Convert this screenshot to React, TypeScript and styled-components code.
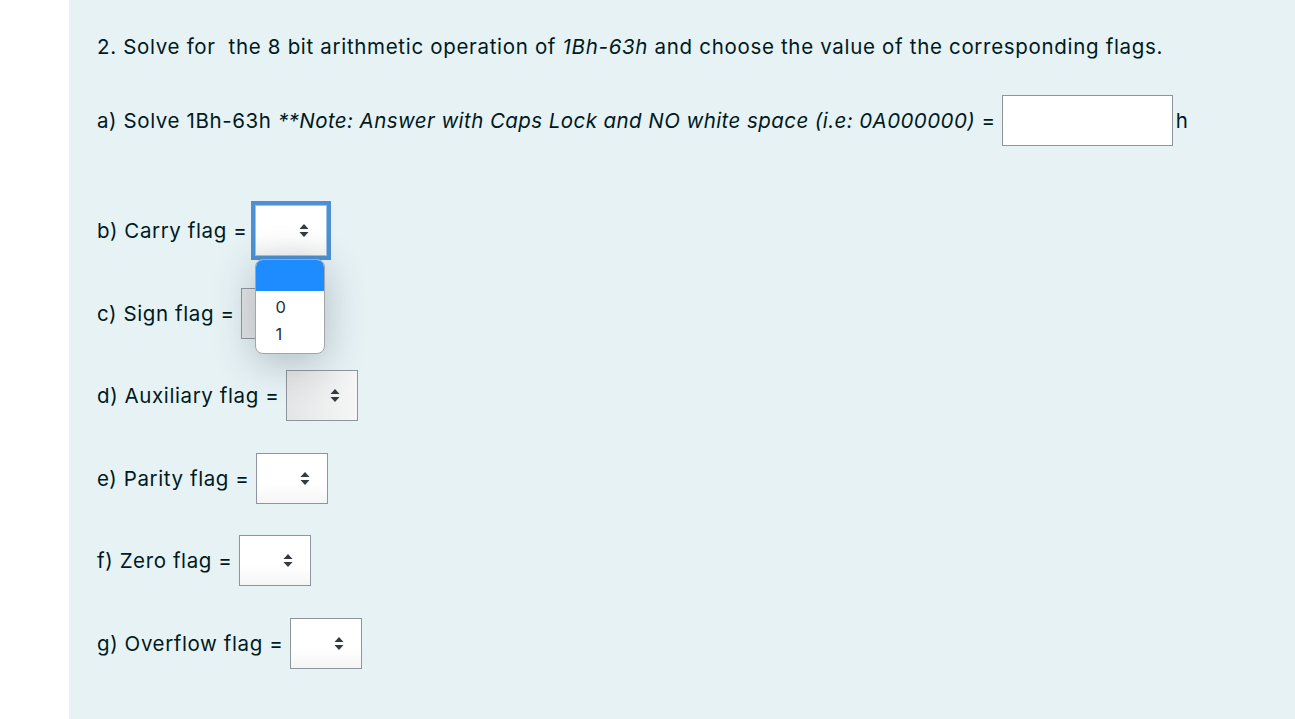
import React from "react";
import styled, { createGlobalStyle } from "styled-components";

const Global = createGlobalStyle`
  html, body { margin: 0; padding: 0; background: #ffffff; }
  body { font-family: "Inter", "Open Sans", sans-serif; color: #001a1e; }
`;

const Page = styled.div`
  display: flex;
  width: 1295px;
  height: 719px;
  overflow: hidden;
`;

const Gutter = styled.div`
  width: 69px;
  flex: none;
  background: #ffffff;
`;

const Panel = styled.div`
  flex: 1;
  background: #e7f2f5;
  padding: 33px 0 0 28px;
  display: flex;
  flex-direction: column;
  font-size: 20.5px;
  letter-spacing: 0.6px;
`;

const Question = styled.div`
  height: 28px;
  line-height: 28px;
  white-space: pre;
  letter-spacing: 0.68px;
`;

const Row = styled.div<{ $top: number }>`
  display: flex;
  align-items: center;
  height: 51px;
  margin-top: ${(p) => p.$top}px;
  white-space: pre;
  position: relative;
`;

const Em = styled.em<{ $tight?: boolean }>`
  font-style: italic;
  letter-spacing: ${(p) => (p.$tight ? "0.43px" : "inherit")};
`;

const TextInput = styled.div`
  width: 169px;
  height: 49px;
  border: 1px solid #8f959e;
  background: #ffffff;
  margin-left: 6px;
`;

const Suffix = styled.span`
  margin-left: 3px;
`;

const SelectWrap = styled.div<{ $gap: number }>`
  position: relative;
  margin-left: ${(p) => p.$gap}px;
`;

const SelectBox = styled.div<{ $shaded?: boolean; $focus?: boolean }>`
  height: 49px;
  border: 1px solid ${(p) => (p.$focus ? "#9ec3ea" : "#8f959e")};
  background: ${(p) =>
    p.$shaded
      ? "linear-gradient(90deg, #e4e5e6 0%, #f6f6f6 100%)"
      : "linear-gradient(180deg, #ffffff 60%, #f5f5f5 100%)"};
  box-shadow: ${(p) => (p.$focus ? "0 0 0 4px #4d90d4" : "none")};
  display: flex;
  align-items: center;
  justify-content: flex-end;
  padding-right: 17px;
  box-sizing: content-box;
  width: 53px;
`;

const Dropdown = styled.div`
  position: absolute;
  left: 0;
  top: 54px;
  width: 68px;
  height: 93px;
  background: #ffffff;
  border: 1px solid #a3a6a8;
  border-radius: 8px;
  overflow: hidden;
  box-shadow: 0 8px 40px rgba(40, 60, 70, 0.3);
  z-index: 5;
  display: flex;
  flex-direction: column;
  font-size: 16.5px;
  letter-spacing: 0;
`;

const Option = styled.div<{ $selected?: boolean }>`
  height: ${(p) => (p.$selected ? "31px" : "27px")};
  line-height: 27px;
  padding-left: 19px;
  background: ${(p) => (p.$selected ? "#1e8cff" : "transparent")};
  color: #22303a;
  &:nth-child(2) { margin-top: 3px; }
`;

const Arrows = () => (
  <svg width="10" height="13" viewBox="0 0 10 13">
    <path d="M5 0 L9.5 5 L0.5 5 Z" fill="#333a40" />
    <path d="M5 13 L9.5 8 L0.5 8 Z" fill="#333a40" />
  </svg>
);

type Sel = { label: string; gap: number; shaded?: boolean; focus?: boolean; open?: boolean };

const selects: Sel[] = [
  { label: "b) Carry flag =", gap: 8, focus: true, open: true },
  { label: "c) Sign flag = ", gap: 0, shaded: true },
  { label: "d) Auxiliary flag = ", gap: 0, shaded: true },
  { label: "e) Parity flag = ", gap: 0 },
  { label: "f) Zero flag = ", gap: 0 },
  { label: "g) Overflow flag = ", gap: 0 },
];

export default function App() {
  return (
    <>
      <Global />
      <Page>
        <Gutter />
        <Panel>
          <Question>
            2. Solve for  the 8 bit arithmetic operation of <Em>1Bh-63h</Em> and choose the value of the
            corresponding flags.
          </Question>
          <Row $top={34}>
            a) Solve 1Bh-63h <Em $tight>**Note: Answer with Caps Lock and NO white space (i.e: 0A000000)</Em> =
            <TextInput />
            <Suffix>h</Suffix>
          </Row>
          {selects.map((s, i) => (
            <Row key={s.label} $top={i === 0 ? 59 : 31.6}>
              {s.label}
              <SelectWrap $gap={s.gap}>
                <SelectBox $shaded={s.shaded} $focus={s.focus}>
                  <Arrows />
                </SelectBox>
                {s.open && (
                  <Dropdown>
                    <Option $selected />
                    <Option>0</Option>
                    <Option>1</Option>
                  </Dropdown>
                )}
              </SelectWrap>
            </Row>
          ))}
        </Panel>
      </Page>
    </>
  );
}
